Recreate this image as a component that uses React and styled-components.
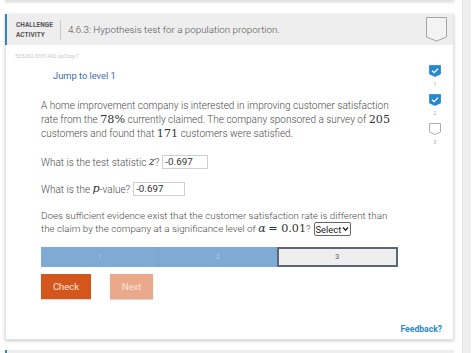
import styled, { createGlobalStyle } from "styled-components";

const GlobalStyle = createGlobalStyle`
  html, body {
    margin: 0;
    padding: 0;
    background: #ffffff;
    font-family: Roboto, "Liberation Sans", sans-serif;
    overflow: hidden;
  }
`;

const Pagina = styled.div`
  display: flex;
  width: 474px;
  height: 353px;
  overflow: hidden;
`;

const Columna = styled.div`
  width: 449px;
  margin-left: 5px;
  display: flex;
  flex-direction: column;
`;

const Barra = styled.div`
  width: 8px;
  margin-left: 8px;
  background: #efefef;
  border-left: 1px solid #e4e4e4;
`;

const TarjetaAnterior = styled.div`
  height: 5px;
  background: #fff;
  border: 1px solid #e4e4e4;
  border-top: none;
  box-shadow: 0 1px 3px rgba(0, 0, 0, 0.22);
  margin-top: -1px;
`;

const Tarjeta = styled.section`
  margin-top: 13px;
  background: #fff;
  border: 1px solid #e4e4e4;
  border-top: none;
  box-shadow: 0 1px 3px rgba(0, 0, 0, 0.22);
`;

const Cabecera = styled.header`
  height: 31px;
  background: #eeeeee;
  border-left: 2px solid #2b88c6;
  margin-left: -1px;
  display: flex;
  align-items: center;
  padding: 0 6px 0 9px;
`;

const Etiqueta = styled.div`
  font-size: 6.4px;
  font-weight: 700;
  color: #555;
  line-height: 10px;
  padding-right: 7px;
  border-right: 1px solid #c9c9c9;
  height: 20px;
  display: flex;
  flex-direction: column;
  justify-content: center;
  letter-spacing: 0.1px;
`;

const Titulo = styled.h1`
  flex: 1;
  margin: 0 0 0 7px;
  font-size: 9.8px;
  font-weight: 300;
  color: #555;
`;

const Cuerpo = styled.div`
  position: relative;
  height: 294px;
  padding: 8px 0 0 0;
  box-sizing: border-box;
`;

const Codigo = styled.div`
  font-size: 5.5px;
  color: #c9c9c9;
  padding-left: 9px;
  height: 8px;
`;

const Fila = styled.div`
  display: flex;
`;

const Contenido = styled.div`
  width: 357px;
  margin-left: 35px;
  color: #4a4a4a;
  font-size: 10px;
  font-weight: 300;
`;

const Salto = styled.div`
  margin: 9px 0 0 12px;
  font-size: 9.3px;
  color: #3d6ca5;
  font-weight: 400;
  line-height: 12px;
`;

const Parrafo = styled.p`
  margin: 17px 0 0 0;
  line-height: 14px;
  width: 352px;
`;

const Mate = styled.span`
  font-family: "DejaVu Serif", "Liberation Serif", serif;
  font-size: 11.2px;
  line-height: 1;
  font-weight: 400;
  font-style: ${(p) => (p.$it ? "italic" : "normal")};
  color: #333;
`;

const Pregunta = styled.div`
  margin-top: ${(p) => p.$mt}px;
  display: flex;
  align-items: center;
  height: 16px;
`;

const Entrada = styled.div`
  width: ${(p) => p.$w}px;
  height: 14px;
  border: 1px solid #cfcfcf;
  box-sizing: border-box;
  margin-left: 3px;
  font-size: 9.8px;
  color: #333;
  font-weight: 400;
  padding-left: 2px;
  line-height: 12px;
`;

const Texto = styled.p`
  margin: 12px 0 0 0;
  line-height: 13px;
  font-size: 9.8px;
`;

const Selector = styled.span`
  display: inline-flex;
  align-items: center;
  height: 14px;
  line-height: 1;
  padding: 0 1px 0 1px;
  border: 1px solid #666;
  border-radius: 2px;
  font-size: 9.4px;
  color: #222;
  font-weight: 400;
  vertical-align: middle;
  margin-left: 3px;
  gap: 1px;
  box-sizing: border-box;
`;

const Progreso = styled.div`
  display: flex;
  margin-top: 11px;
  width: 357px;
  height: 20px;
`;

const Segmento = styled.div`
  flex: 1;
  display: flex;
  align-items: center;
  justify-content: center;
  box-sizing: border-box;
  font-size: 7px;
  font-weight: 400;
  background: ${(p) => (p.$hecho ? "#7eaad4" : "#eeeeee")};
  color: ${(p) => (p.$hecho ? "#b3cbe6" : "#555")};
  border: ${(p) => (p.$actual ? "2px solid #5c6678" : "none")};
  border-left: ${(p) => (p.$sep ? "1px dotted #6f9aca" : p.$actual ? "2px solid #5c6678" : "none")};
`;

const Botones = styled.div`
  display: flex;
  gap: 19px;
  margin-top: 7px;
`;

const Boton = styled.button`
  height: 25px;
  width: ${(p) => p.$w}px;
  border: none;
  padding: 0;
  background: ${(p) => (p.$off ? "#eaa98b" : "#d3571d")};
  color: ${(p) => (p.$off ? "#fbe5da" : "#f8e3d8")};
  font-family: Roboto, "Liberation Sans", sans-serif;
  font-size: 9.5px;
  box-shadow: 0 1px 1px rgba(0, 0, 0, 0.15);
`;

const Niveles = styled.div`
  margin-left: auto;
  margin-right: 11px;
  margin-top: 4px;
  display: flex;
  flex-direction: column;
  align-items: center;
  width: 14px;
`;

const Numero = styled.div`
  font-size: 5px;
  line-height: 7px;
  color: #aaa;
  height: 7px;
  margin: 4px 0 6px;
`;

const Comentario = styled.a`
  position: absolute;
  right: 11px;
  bottom: 5px;
  font-size: 8.6px;
  font-weight: 700;
  color: #2c8ac8;
`;

const TarjetaSiguiente = styled.div`
  margin-top: 10px;
  height: 14px;
  background: #eeeeee;
  border-left: 2px solid #2b88c6;
`;

const Escudo = ({ lleno }) => (
  <svg width="12" height="12" viewBox="0 0 12 12">
    <path
      d="M0.5 0.5 H11.5 V9 L6 11.5 L0.5 9 Z"
      fill={lleno ? "#2589d1" : "#fff"}
      stroke={lleno ? "#2589d1" : "#9a9a9a"}
      strokeWidth="0.8"
    />
    {lleno && (
      <path d="M3 5.8 L5.1 7.7 L9 3.7" fill="none" stroke="#fff" strokeWidth="1.3" />
    )}
  </svg>
);

const App = () => {
  return (
    <>
      <GlobalStyle />
      <Pagina>
        <Columna>
          <TarjetaAnterior />
          <Tarjeta>
            <Cabecera>
              <Etiqueta>
                <span>CHALLENGE</span>
                <span>ACTIVITY</span>
              </Etiqueta>
              <Titulo>4.6.3: Hypothesis test for a population proportion.</Titulo>
              <svg width="21" height="25" viewBox="0 0 21 25">
                <path d="M0.5 0.5 H20.5 V20 L10.5 24 L0.5 20 Z" fill="#f3f3f3" stroke="#9c9c9c" strokeWidth="0.9" />
              </svg>
            </Cabecera>
            <Cuerpo>
              <Codigo>535260.3351402.qx3zqy7</Codigo>
              <Fila>
                <Contenido>
                  <Salto>Jump to level 1</Salto>
                  <Parrafo>
                    A home improvement company is interested in improving customer satisfaction
                    rate from the <Mate>78%</Mate> currently claimed. The company sponsored a survey
                    of <Mate>205</Mate> customers and found that <Mate>171</Mate> customers were satisfied.
                  </Parrafo>
                  <Pregunta $mt={13}>
                    What is the test statistic&nbsp;<Mate $it>z</Mate>?
                    <Entrada $w={46}>-0.697</Entrada>
                  </Pregunta>
                  <Pregunta $mt={11}>
                    What is the&nbsp;<Mate $it>p</Mate>-value?
                    <Entrada $w={52}>-0.697</Entrada>
                  </Pregunta>
                  <Texto>
                    Does sufficient evidence exist that the customer satisfaction rate is different than
                    the claim by the company at a significance level of <Mate $it>α</Mate>{" "}
                    <Mate>= 0.01</Mate>?
                    <Selector>
                      Select
                      <svg width="7" height="6" viewBox="0 0 7 6">
                        <path d="M1 1.5 L3.5 4.2 L6 1.5" fill="none" stroke="#222" strokeWidth="1.3" />
                      </svg>
                    </Selector>
                  </Texto>
                  <Progreso>
                    <Segmento $hecho>1</Segmento>
                    <Segmento $hecho $sep>2</Segmento>
                    <Segmento $actual>3</Segmento>
                  </Progreso>
                  <Botones>
                    <Boton $w={50}>Check</Boton>
                    <Boton $w={43} $off>Next</Boton>
                  </Botones>
                </Contenido>
                <Niveles>
                  <Escudo lleno />
                  <Numero>1</Numero>
                  <Escudo lleno />
                  <Numero>2</Numero>
                  <Escudo />
                  <Numero>3</Numero>
                </Niveles>
              </Fila>
              <Comentario>Feedback?</Comentario>
            </Cuerpo>
          </Tarjeta>
          <TarjetaSiguiente />
        </Columna>
        <Barra />
      </Pagina>
    </>
  );
};

export default App;
